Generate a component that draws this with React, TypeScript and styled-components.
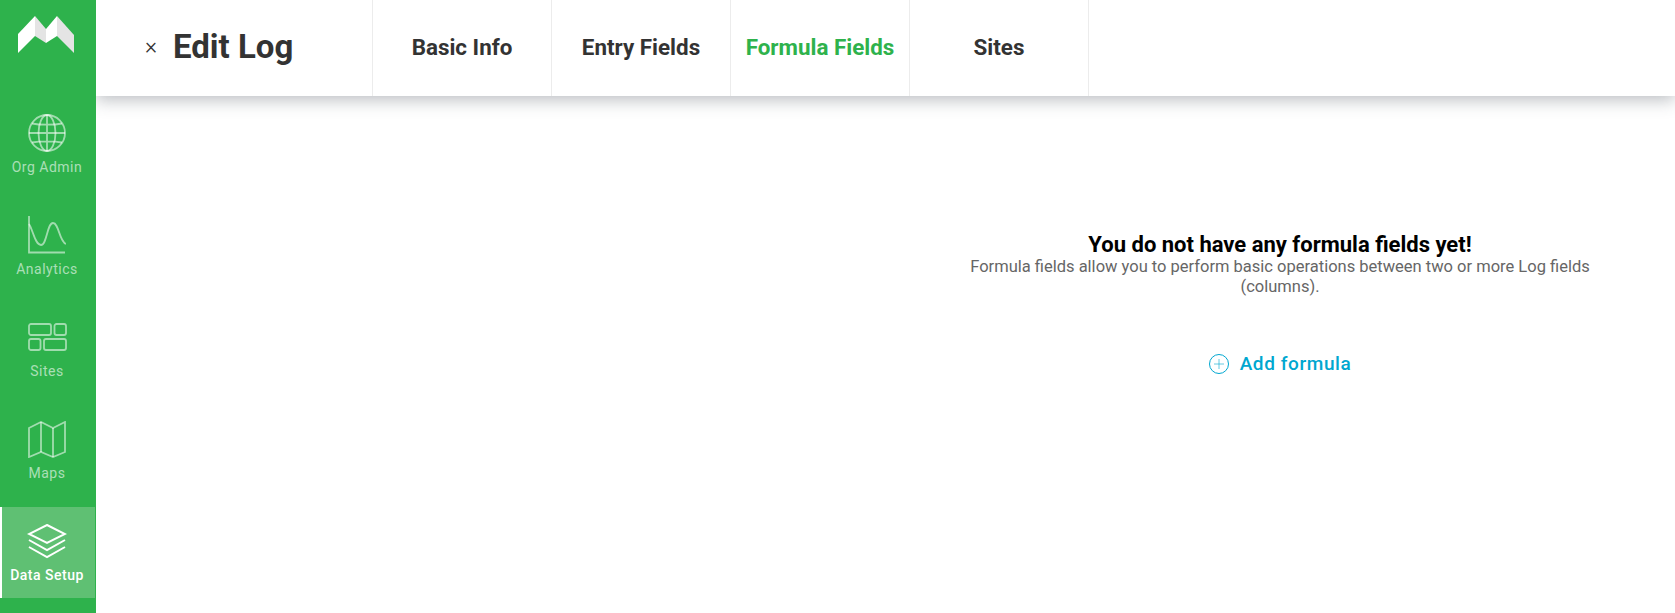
import React from 'react';
import styled, { createGlobalStyle } from 'styled-components';

const GlobalStyle = createGlobalStyle`
  html, body {
    margin: 0;
    padding: 0;
    background: #ffffff;
    font-family: Roboto, "Liberation Sans", sans-serif;
  }
`;

const GlobeIcon = () => (
  <NavSvg width="38" height="38" viewBox="0 0 38 38">
    <circle cx="19" cy="19" r="18" />
    <ellipse cx="19" cy="19" rx="8.500" ry="18" />
    <path d="M19 1v36M1 19h36M4 9.500c8 1.600 22 1.600 30 0M4 28.500c8-1.600 22-1.600 30 0" />
  </NavSvg>
);

const ChartIcon = () => (
  <NavSvg width="38" height="38" viewBox="0 0 38 38">
    <path d="M1 0v36.500h36" />
    <path d="M1 8C5 14 7 29 13 29 19 29 19 7 25 7 31 7 31 25 38 28" />
  </NavSvg>
);

const SitesIcon = () => (
  <NavSvg width="39" height="28" viewBox="0 0 39 28">
    <rect x="1" y="1" width="22" height="11" rx="2" />
    <rect x="26.500" y="1" width="11.500" height="11" rx="2" />
    <rect x="1" y="16" width="11.500" height="11" rx="2" />
    <rect x="16" y="16" width="22" height="11" rx="2" />
  </NavSvg>
);

const MapIcon = () => (
  <NavSvg width="38" height="37" viewBox="0 0 38 37">
    <path d="M1 7 13 1l12 6L37 1v30l-12 5-12-5-12 5z" />
    <path d="M13 1v30M25 7v29" />
  </NavSvg>
);

const LayersIcon = () => (
  <ActiveSvg width="40" height="35" viewBox="0 0 40 35">
    <path d="M20 1 38 10 20 19 2 10z" />
    <path d="M2 16l18 10 18-10" />
    <path d="M2 23l18 10 18-10" />
  </ActiveSvg>
);

const Logo = () => (
  <svg width="56" height="37" viewBox="0 0 56 37">
    <path d="M0 37V18L17 0v20z" fill="#ffffff" />
    <path d="M17 0 28 13v14L17 20z" fill="#e4e4e4" />
    <path d="M28 13 39 0v20L28 27z" fill="#ffffff" />
    <path d="M39 0 56 19v18L39 20z" fill="#e4e4e4" />
  </svg>
);

const navItems = [
  { label: 'Org Admin', icon: <GlobeIcon /> },
  { label: 'Analytics', icon: <ChartIcon /> },
  { label: 'Sites', icon: <SitesIcon /> },
  { label: 'Maps', icon: <MapIcon /> },
];

const tabs = ['Basic Info', 'Entry Fields', 'Formula Fields', 'Sites'];

export default function App() {
  return (
    <Page>
      <GlobalStyle />
      <Sidebar>
        <LogoBox>
          <Logo />
        </LogoBox>
        <Nav>
          {navItems.map((item) => (
            <NavItem key={item.label}>
              <IconSlot>{item.icon}</IconSlot>
              <NavLabel>{item.label}</NavLabel>
            </NavItem>
          ))}
          <NavItem $active>
            <IconSlot>
              <LayersIcon />
            </IconSlot>
            <NavLabel $active>Data Setup</NavLabel>
          </NavItem>
        </Nav>
      </Sidebar>
      <Main>
        <Header>
          <TitleBox>
            <CloseButton>×</CloseButton>
            <Title>Edit Log</Title>
          </TitleBox>
          {tabs.map((tab) => (
            <Tab key={tab} $active={tab === 'Formula Fields'}>
              {tab}
            </Tab>
          ))}
        </Header>
        <Content>
          <EmptyState>
            <EmptyTitle>You do not have any formula fields yet!</EmptyTitle>
            <EmptyText>
              Formula fields allow you to perform basic operations between two or more Log fields
              (columns).
            </EmptyText>
            <AddButton>
              <svg width="20" height="20" viewBox="0 0 20 20" fill="none" stroke="#00a7d0">
                <circle cx="10" cy="10" r="9.500" />
                <path d="M10 5v10M5 10h10" strokeOpacity="0.6" />
              </svg>
              Add formula
            </AddButton>
          </EmptyState>
        </Content>
      </Main>
    </Page>
  );
}

const Page = styled.div`
  display: flex;
  width: 1675px;
  height: 613px;
  overflow: hidden;
  background: #ffffff;
`;

const Sidebar = styled.aside`
  position: relative;
  z-index: 2;
  flex: 0 0 96px;
  box-sizing: border-box;
  display: flex;
  flex-direction: column;
  background: #2eb24c;
`;

const LogoBox = styled.div`
  display: flex;
  justify-content: center;
  box-sizing: border-box;
  height: 99px;
  padding: 16px 4px 0 0;
`;

const Nav = styled.nav`
  display: flex;
  flex-direction: column;
  gap: 11px;
`;

const NavItem = styled.div<{ $active?: boolean }>`
  box-sizing: border-box;
  height: 91px;
  width: 95px;
  display: flex;
  flex-direction: column;
  align-items: center;
  justify-content: flex-start;
  padding: 14px ${(p) => (p.$active ? '3px' : '2px')} 0 ${(p) => (p.$active ? '0' : '1px')};
  background: ${(p) => (p.$active ? '#5fc073' : 'transparent')};
  border-left: ${(p) => (p.$active ? '2px solid #ffffff' : '0')};
`;

const IconSlot = styled.div`
  height: 40px;
  display: flex;
  align-items: center;
  justify-content: center;
`;

const NavSvg = styled.svg`
  fill: none;
  stroke: rgba(255, 255, 255, 0.55);
  stroke-width: 1.800;
`;

const ActiveSvg = styled.svg`
  fill: none;
  stroke: #ffffff;
  stroke-width: 2;
`;

const NavLabel = styled.div<{ $active?: boolean }>`
  margin-top: 6px;
  font-size: 14px;
  line-height: 16px;
  letter-spacing: 0.5px;
  white-space: nowrap;
  font-weight: ${(p) => (p.$active ? 500 : 400)};
  color: ${(p) => (p.$active ? '#ffffff' : 'rgba(255, 255, 255, 0.6)')};
`;

const Main = styled.div`
  flex: 1;
  display: flex;
  flex-direction: column;
  min-width: 0;
`;

const Header = styled.header`
  flex: 0 0 96px;
  display: flex;
  background: #ffffff;
  box-shadow: 0 4px 16px rgba(60, 70, 80, 0.35);
`;

const TitleBox = styled.div`
  flex: 0 0 277px;
  display: flex;
  align-items: center;
  padding: 0 0 3px 49px;
  box-sizing: border-box;
  border-right: 1px solid #ececec;
`;

const CloseButton = styled.span`
  width: 28px;
  font-size: 23px;
  font-weight: 300;
  color: #333333;
  line-height: 1;
`;

const Title = styled.h1`
  margin: 0;
  font-size: 33px;
  font-weight: 700;
  color: #333333;
`;

const Tab = styled.div<{ $active?: boolean }>`
  flex: 0 0 179px;
  box-sizing: border-box;
  display: flex;
  align-items: center;
  justify-content: center;
  padding-bottom: 2px;
  border-right: 1px solid #ececec;
  font-size: 22.400px;
  font-weight: 700;
  color: ${(p) => (p.$active ? '#2eb24c' : '#333333')};
`;

const Content = styled.main`
  flex: 1;
  display: flex;
  justify-content: flex-end;
`;

const EmptyState = styled.section`
  width: 790px;
  box-sizing: border-box;
  padding: 137px 75px 0;
  display: flex;
  flex-direction: column;
  align-items: center;
  text-align: center;
`;

const EmptyTitle = styled.h2`
  margin: 0;
  font-size: 22px;
  line-height: 24px;
  font-weight: 700;
  color: #000000;
`;

const EmptyText = styled.p`
  margin: 0;
  font-size: 16.500px;
  line-height: 20px;
  color: #666666;
`;

const AddButton = styled.div`
  margin-top: 55px;
  display: flex;
  align-items: center;
  gap: 11px;
  font-size: 19px;
  font-weight: 500;
  letter-spacing: 0.6px;
  color: #00a7d0;
`;
